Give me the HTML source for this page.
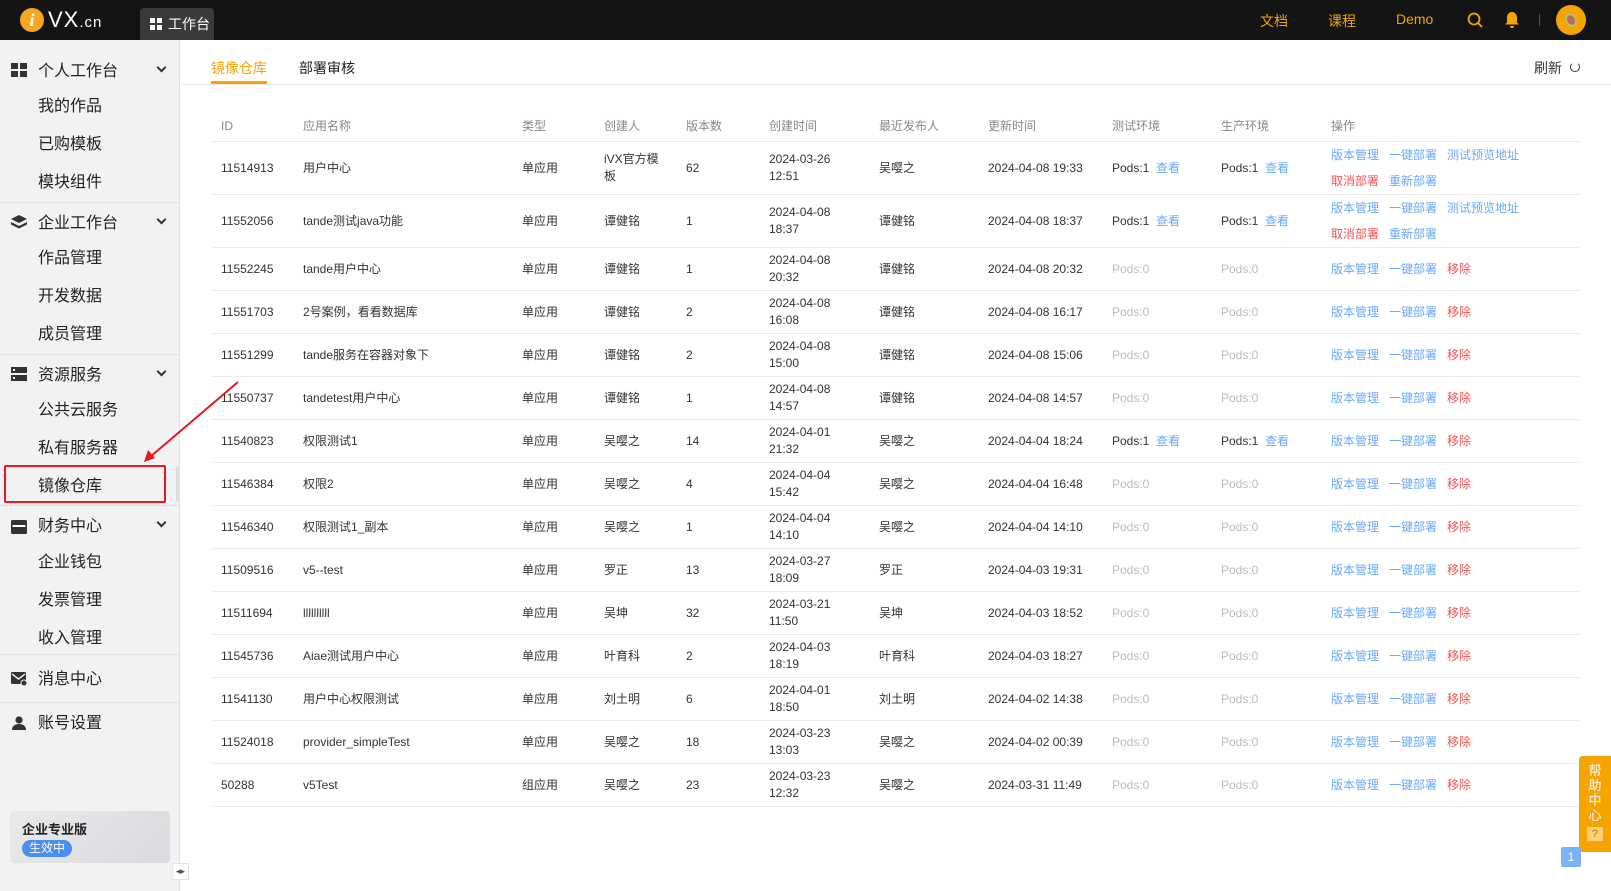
<!DOCTYPE html>
<html><head><meta charset="utf-8"><style>
*{margin:0;padding:0;box-sizing:border-box}
body{width:1611px;height:891px;overflow:hidden;background:#fff;font-family:"Liberation Sans","Noto Sans CJK SC",sans-serif;position:relative;color:#333}
.top{position:absolute;left:0;top:0;width:1611px;height:40px;background:#141414}
.logo{position:absolute;left:20px;top:8px;width:24px;height:24px;border-radius:50%;background:#f5a623;color:#fff;font:italic bold 18px "Liberation Serif",serif;text-align:center;line-height:24px}
.logotxt{position:absolute;left:48px;top:7px;color:#fff;font-size:22px;letter-spacing:1px}
.logotxt small{font-size:15px}
.wt{position:absolute;left:140px;top:8px;width:74px;height:32px;background:#3a3a3a;border-radius:4px 4px 0 0;color:#fff;font-size:14px;line-height:32px;padding-left:28px}
.wt i{position:absolute;left:10px;top:10px;width:12px;height:12px;background:
linear-gradient(#fff,#fff) 0 0/5px 5px no-repeat,linear-gradient(#fff,#fff) 7px 0/5px 5px no-repeat,linear-gradient(#fff,#fff) 0 7px/5px 5px no-repeat,linear-gradient(#fff,#fff) 7px 7px/5px 5px no-repeat}
.nav{position:absolute;top:11px;color:#f5a400;font-size:14px}
.side{position:absolute;left:0;top:40px;width:180px;height:851px;background:#f2f2f2;border-right:1px solid #e4e4e4}
.si{position:absolute;left:38px;font-size:16px;color:#222}
.sh{position:absolute;left:38px;font-size:16px;color:#222}
.ic{position:absolute;left:11px;width:16px;height:14px}
.chev{position:absolute;left:158px;width:7px;height:7px;border-right:2px solid #333;border-bottom:2px solid #333;transform:rotate(45deg)}
.sep{position:absolute;left:0;width:180px;height:1px;background:#e2e2e2}
.tab{position:absolute;top:58px;font-size:14px}
.row{position:absolute;left:211px;width:1369px;border-bottom:1px solid #ececec;font-size:12px;color:#333}
.row span{position:absolute;line-height:17px}
.b{color:#6aa9f7}.r{color:#f05454}.g{color:#bbb}
b{font-weight:normal}
</style></head><body>
<div class="top">
<div class="logo">i</div><div class="logotxt">VX<small>.cn</small></div>
<div class="wt"><i></i>工作台</div>
<div class="nav" style="left:1260px">文档</div>
<div class="nav" style="left:1328px">课程</div>
<div class="nav" style="left:1396px">Demo</div>
<svg style="position:absolute;left:1467px;top:12px" width="17" height="17" viewBox="0 0 17 17"><circle cx="7" cy="7" r="5.5" fill="none" stroke="#f5a400" stroke-width="1.8"/><path d="M11 11l4 4" stroke="#f5a400" stroke-width="1.8"/></svg>
<svg style="position:absolute;left:1504px;top:11px" width="16" height="18" viewBox="0 0 16 18"><path d="M8 1c3 0 5 2.5 5 5.5v5l2 2H1l2-2v-5C3 3.5 5 1 8 1z M6 15h4a2 2 0 0 1-4 0z" fill="#f5a400"/></svg>
<div style="position:absolute;left:1539px;top:14px;width:1px;height:12px;background:#555"></div>
<div style="position:absolute;left:1556px;top:5px;width:30px;height:30px;border-radius:50%;background:#f5a400"><div style="position:absolute;left:8px;top:8px;width:14px;height:14px;border-radius:50%;background:#c06a50;border:2px solid #a5c98a;transform:rotate(-30deg) scaleX(.75)"></div></div>
</div>

<div class="side">
<div class="sep" style="top:162px"></div><div class="sep" style="top:314px"></div><div class="sep" style="top:465px"></div><div class="sep" style="top:614px"></div><div class="sep" style="top:662px"></div>
</div>
<svg class="ic" style="top:63px" viewBox="0 0 16 14"><rect x="0" y="0" width="7" height="6" fill="#333"/><rect x="9" y="0" width="7" height="6" fill="#333"/><rect x="0" y="8" width="7" height="6" fill="#333"/><rect x="9" y="8" width="7" height="6" fill="#333"/></svg>
<div class="sh" style="top:57px">个人工作台</div><div class="chev" style="top:64px"></div>
<div class="si" style="top:92px">我的作品</div>
<div class="si" style="top:130px">已购模板</div>
<div class="si" style="top:168px">模块组件</div>
<svg class="ic" style="top:215px" viewBox="0 0 16 14"><path d="M8 0l8 4-8 4-8-4z" fill="#333"/><path d="M0 7l8 4 8-4v2.5l-8 4-8-4z" fill="#333"/></svg>
<div class="sh" style="top:209px">企业工作台</div><div class="chev" style="top:216px"></div>
<div class="si" style="top:244px">作品管理</div>
<div class="si" style="top:282px">开发数据</div>
<div class="si" style="top:320px">成员管理</div>
<svg class="ic" style="top:367px" viewBox="0 0 16 14"><rect x="0" y="0" width="16" height="6" fill="#333"/><rect x="0" y="8" width="16" height="6" fill="#333"/><rect x="2" y="2" width="2" height="2" fill="#fff"/><rect x="2" y="10" width="2" height="2" fill="#fff"/></svg>
<div class="sh" style="top:361px">资源服务</div><div class="chev" style="top:368px"></div>
<div class="si" style="top:396px">公共云服务</div>
<div class="si" style="top:434px">私有服务器</div>
<div style="position:absolute;left:176px;top:467px;width:3px;height:34px;background:#ddd"></div>
<div class="si" style="top:472px">镜像仓库</div>
<div style="position:absolute;left:4px;top:465px;width:162px;height:38px;border:2px solid #f0141e;border-radius:2px"></div>
<svg class="ic" style="top:520px" viewBox="0 0 16 14"><rect x="0" y="0" width="16" height="14" rx="1.5" fill="#333"/><rect x="1.5" y="5" width="13" height="2" fill="#fff"/></svg>
<div class="sh" style="top:512px">财务中心</div><div class="chev" style="top:519px"></div>
<div class="si" style="top:548px">企业钱包</div>
<div class="si" style="top:586px">发票管理</div>
<div class="si" style="top:624px">收入管理</div>
<svg class="ic" style="top:672px" viewBox="0 0 16 14"><rect x="0" y="0" width="15" height="12" rx="1.5" fill="#333"/><path d="M1 2l6.5 5 6.5-5" stroke="#fff" fill="none" stroke-width="1.4"/><circle cx="13" cy="11" r="3" fill="#333" stroke="#f2f2f2"/></svg>
<div class="sh" style="top:665px">消息中心</div>
<svg class="ic" style="top:716px" viewBox="0 0 16 14"><circle cx="8" cy="4" r="3.6" fill="#333"/><path d="M1 14c0-4 3-6 7-6s7 2 7 6z" fill="#333"/></svg>
<div class="sh" style="top:709px">账号设置</div>
<div style="position:absolute;left:10px;top:811px;width:160px;height:52px;border-radius:4px;background:linear-gradient(135deg,#e9e9eb,#d8dadd)"><div style="position:absolute;left:12px;top:8px;font-size:13px;font-weight:bold;color:#222">企业专业版</div><div style="position:absolute;left:12px;top:29px;width:50px;height:17px;border-radius:9px;background:#4a8ef2;color:#fff;font-size:12px;text-align:center;line-height:17px">生效中</div></div>
<div style="position:absolute;left:172px;top:863px;width:17px;height:17px;background:#fff;border:1px solid #e3e3e3;font-size:9px;text-align:center;line-height:15px;color:#555">◂▸</div>

<div class="tab" style="left:211px;color:#f5a400">镜像仓库</div>
<div style="position:absolute;left:211px;top:81px;width:56px;height:3px;background:#f5a400"></div>
<div class="tab" style="left:299px;color:#222">部署审核</div>
<div style="position:absolute;left:181px;top:84px;width:1430px;height:1px;background:#e8e8e8"></div>
<div style="position:absolute;left:1534px;top:58px;font-size:14px;color:#333">刷新</div>
<div style="position:absolute;left:1570px;top:62px;width:10px;height:10px;border:1.5px solid #333;border-radius:50%;border-top-color:transparent"></div>

<div class="row" style="top:118px;height:24px;color:#888;font-size:12px">
<span style="left:10px">ID</span><span style="left:92px">应用名称</span><span style="left:311px">类型</span><span style="left:393px">创建人</span><span style="left:475px">版本数</span><span style="left:558px">创建时间</span><span style="left:668px">最近发布人</span><span style="left:777px">更新时间</span><span style="left:901px">测试环境</span><span style="left:1010px">生产环境</span><span style="left:1120px">操作</span>
</div>
<div id="rows"></div>
<div style="position:absolute;left:1579px;top:756px;width:32px;height:96px;background:#f5a400;border-radius:4px 0 0 4px;color:#fff;font-size:13px;text-align:center;line-height:15px;padding-top:7px">帮<br>助<br>中<br>心<div style="margin:4px auto 0;width:16px;height:14px;background:#ffd27a;color:#e58a00;font-size:11px;line-height:14px;font-weight:bold">?</div></div>
<div style="position:absolute;left:1561px;top:847px;width:20px;height:20px;background:#7ab2f5;border-radius:2px;color:#fff;font-size:12px;text-align:center;line-height:20px">1</div>
<svg style="position:absolute;left:0;top:0" width="300" height="500"><path d="M238 382L150 457" stroke="#f0141e" stroke-width="2"/><path d="M144 462l4-12 7 8z" fill="#f0141e"/></svg>
<script>
var d=[["11514913","用户中心","单应用","iVX官方模<br>板","62","2024-03-26<br>12:51","吴嘤之","2024-04-08 19:33",1,1,1],
["11552056","tande测试java功能","单应用","谭健铭","1","2024-04-08<br>18:37","谭健铭","2024-04-08 18:37",1,1,1],
["11552245","tande用户中心","单应用","谭健铭","1","2024-04-08<br>20:32","谭健铭","2024-04-08 20:32",0,0,0],
["11551703","2号案例，看看数据库","单应用","谭健铭","2","2024-04-08<br>16:08","谭健铭","2024-04-08 16:17",0,0,0],
["11551299","tande服务在容器对象下","单应用","谭健铭","2","2024-04-08<br>15:00","谭健铭","2024-04-08 15:06",0,0,0],
["11550737","tandetest用户中心","单应用","谭健铭","1","2024-04-08<br>14:57","谭健铭","2024-04-08 14:57",0,0,0],
["11540823","权限测试1","单应用","吴嘤之","14","2024-04-01<br>21:32","吴嘤之","2024-04-04 18:24",1,1,0],
["11546384","权限2","单应用","吴嘤之","4","2024-04-04<br>15:42","吴嘤之","2024-04-04 16:48",0,0,0],
["11546340","权限测试1_副本","单应用","吴嘤之","1","2024-04-04<br>14:10","吴嘤之","2024-04-04 14:10",0,0,0],
["11509516","v5--test","单应用","罗正","13","2024-03-27<br>18:09","罗正","2024-04-03 19:31",0,0,0],
["11511694","llllllllll","单应用","吴坤","32","2024-03-21<br>11:50","吴坤","2024-04-03 18:52",0,0,0],
["11545736","Aiae测试用户中心","单应用","叶育科","2","2024-04-03<br>18:19","叶育科","2024-04-03 18:27",0,0,0],
["11541130","用户中心权限测试","单应用","刘土明","6","2024-04-01<br>18:50","刘土明","2024-04-02 14:38",0,0,0],
["11524018","provider_simpleTest","单应用","吴嘤之","18","2024-03-23<br>13:03","吴嘤之","2024-04-02 00:39",0,0,0],
["50288","v5Test","组应用","吴嘤之","23","2024-03-23<br>12:32","吴嘤之","2024-03-31 11:49",0,0,0]];
var h="",yy=142,S='&nbsp;&nbsp;&nbsp;';
d.forEach(function(r,i){var H=i<2?52:42;var m=H/2;
function s(l,t,two){return '<span style="left:'+l+'px;top:'+(two?m-17:m-8)+'px">'+t+'</span>';}
var o='<div class="row" style="top:'+yy+'px;height:'+(H+1)+'px">';
o+=s(10,r[0])+s(92,r[1])+s(311,r[2])+s(393,r[3],i==0)+s(475,r[4])+s(558,r[5],1)+s(668,r[6])+s(777,r[7]);
o+=r[8]?s(901,'Pods:1 &nbsp;<b class="b">查看</b>'):s(901,'<b class="g">Pods:0</b>');
o+=r[9]?s(1010,'Pods:1 &nbsp;<b class="b">查看</b>'):s(1010,'<b class="g">Pods:0</b>');
if(r[10]){o+='<span class="b" style="left:1120px;top:5px">版本管理'+S+'一键部署'+S+'测试预览地址</span><span style="left:1120px;top:31px"><b class="r">取消部署</b>'+S+'<b class="b">重新部署</b></span>';}
else o+=s(1120,'<b class="b">版本管理'+S+'一键部署</b>'+S+'<b class="r">移除</b>');
o+='</div>';h+=o;yy+=H+1;});
document.getElementById("rows").innerHTML=h;
</script>
</body></html>
